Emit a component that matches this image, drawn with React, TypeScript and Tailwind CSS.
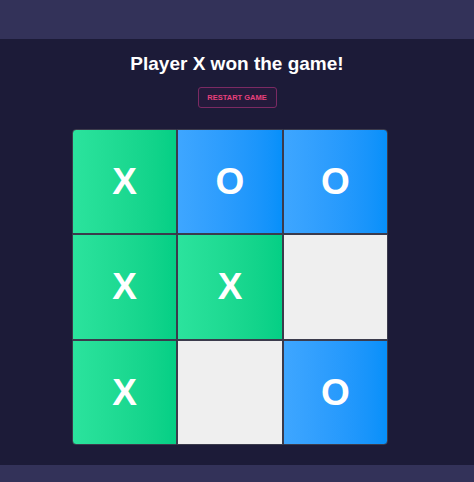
import React from "react";

type V = "X" | "O" | "";
const board: V[] = ["X", "O", "O", "X", "X", "", "X", "", "O"];

function Cell({ v, idx }: { v: V; idx: number }) {
  const base =
    "flex items-center justify-center border border-[#3b3b4c] text-[37px] font-bold text-white leading-none";
  const corner =
    idx === 0
      ? " rounded-tl-[4px]"
      : idx === 2
      ? " rounded-tr-[4px]"
      : idx === 6
      ? " rounded-bl-[4px]"
      : idx === 8
      ? " rounded-br-[4px]"
      : "";
  const bg =
    v === "X"
      ? " bg-gradient-to-r from-[#2be39d] to-[#04cf85]"
      : v === "O"
      ? " bg-gradient-to-r from-[#3ea6ff] to-[#0690fa]"
      : " bg-[#efefef]";
  return <div className={base + corner + bg}>{v}</div>;
}

export default function App() {
  return (
    <div
      className="flex h-[482px] w-[474px] flex-col bg-[#1c1b38]"
      style={{ fontFamily: '"Liberation Sans", Arial, sans-serif' }}
    >
      <div className="h-[39px] shrink-0 bg-[#333259]" />
      <div className="flex flex-1 flex-col items-center pt-[13px]">
        <h1 className="text-[19px] font-bold leading-[24px] text-white">
          Player X won the game!
        </h1>
        <button className="mt-[11px] h-[21px] w-[79px] rounded-[3px] border border-[#7b2a63] bg-[#241a3b] text-[7.5px] font-bold leading-none text-[#e8407c]">
          RESTART GAME
        </button>
        <div className="mr-[14px] mt-[21px] grid h-[316px] w-[316px] grid-cols-3 grid-rows-3">
          {board.map((v, i) => (
            <Cell key={i} v={v} idx={i} />
          ))}
        </div>
      </div>
      <div className="h-[17px] shrink-0 bg-[#333259]" />
    </div>
  );
}
